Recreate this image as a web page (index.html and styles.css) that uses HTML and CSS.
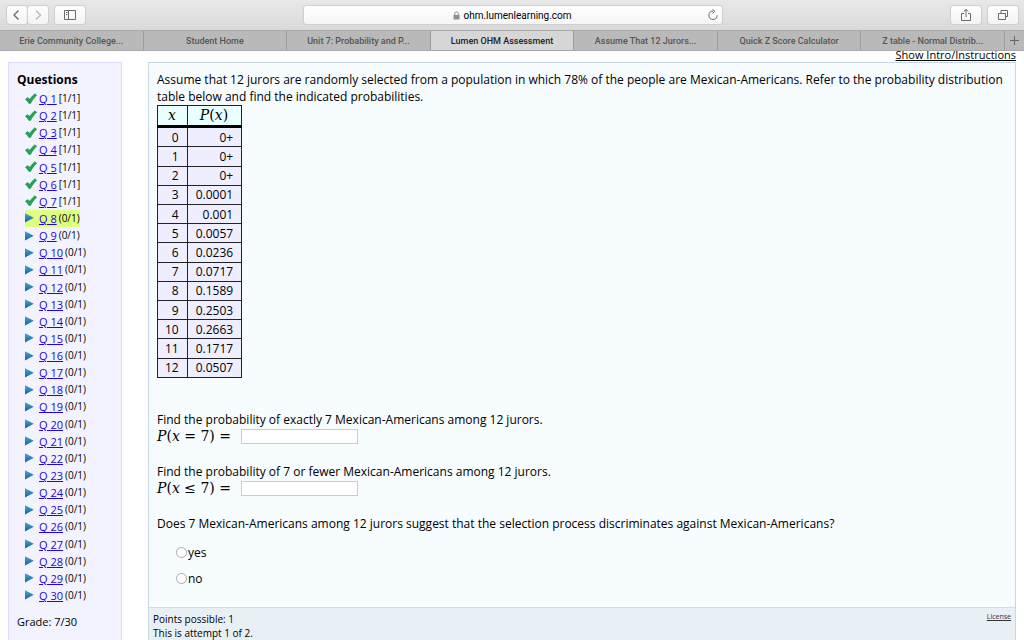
FILE: index.html
```html
<!DOCTYPE html>
<html lang="en">
<head>
    <meta charset="UTF-8">
    <meta name="viewport" content="width=device-width, initial-scale=1.0">
    <title>Lumen OHM Assessment</title>
    <link rel="stylesheet" href="styles.css">
</head>
<body>
    <svg class="defs" aria-hidden="true">
        <linearGradient id="blue" x1="0" y1="0" x2="0" y2="1">
            <stop offset="0" stop-color="#4aa5d0"/>
            <stop offset="1" stop-color="#12659c"/>
        </linearGradient>
        <symbol id="check" viewBox="0 0 12 12">
            <path d="M0.4 6.2 L2.6 4.6 L4.6 6.2 C6.3 4 8 2.2 9.8 0.8 L11.7 2.2 C9 4.7 7.2 7.5 5.6 10.4 L3.8 10.4 C2.9 8.8 1.8 7.4 0.4 6.2 Z" fill="#22a455" stroke="#168a45" stroke-width="0.5"/>
        </symbol>
        <symbol id="arrow" viewBox="0 0 12 12">
            <path d="M0 1.2 L8.8 5.7 L0 10.4 Z" fill="url(#blue)"/>
        </symbol>
    </svg>

    <!-- Browser toolbar -->
    <header class="toolbar">
        <div class="toolbar-left">
            <div class="nav-buttons">
                <button class="tool-btn" type="button" aria-label="Back">
                    <svg width="20" height="18" viewBox="0 0 20 18"><path d="M11.5 4.5 L7 9 L11.5 13.5" fill="none" stroke="#666" stroke-width="1.3"/></svg>
                </button>
                <button class="tool-btn" type="button" aria-label="Forward" disabled>
                    <svg width="20" height="18" viewBox="0 0 20 18"><path d="M8 4.5 L12.5 9 L8 13.5" fill="none" stroke="#b8b8b8" stroke-width="1.3"/></svg>
                </button>
            </div>
            <button class="tool-btn wide" type="button" aria-label="Sidebar">
                <svg width="14" height="12" viewBox="0 0 14 12"><path d="M1.5 1.5 H12.5 V10.5 H1.5 Z M5.5 1.5 V10.5" fill="none" stroke="#6a6a6a"/><path d="M3 3.5 H4.5 M3 5.5 H4.5" stroke="#6a6a6a"/></svg>
            </button>
        </div>
        <div class="address">
            <span class="host">
                <svg width="7" height="9" viewBox="0 0 7 9"><rect x="0.5" y="4" width="6" height="4.5" fill="#8e8e8e"/><path d="M1.7 4.5 V2.7 A1.8 1.8 0 0 1 5.3 2.7 V4.5" fill="none" stroke="#8e8e8e"/></svg>
                ohm.lumenlearning.com
            </span>
            <button class="reload" type="button" aria-label="Reload">
                <svg width="12" height="12" viewBox="0 0 12 12"><path d="M6 2.2 A4.1 4.1 0 1 0 10.1 6.3 M5.4 0.4 L7.9 2.3 L5.4 4.4" fill="none" stroke="#707070"/></svg>
            </button>
        </div>
        <div class="toolbar-right">
            <button class="tool-btn wide" type="button" aria-label="Share">
                <svg width="12" height="14" viewBox="0 0 12 14"><path d="M4 5.5 H1.5 V12.5 H10.5 V5.5 H8 M6 9 V1.5 M3.7 3.6 L6 1.3 L8.3 3.6" fill="none" stroke="#6a6a6a"/></svg>
            </button>
            <button class="tool-btn wide" type="button" aria-label="Show all tabs">
                <svg width="12" height="12" viewBox="0 0 12 12"><path d="M1.5 4.5 H8.5 V10.5 H1.5 Z M4 4.5 V1.5 H10.5 V7.5 H8.5" fill="none" stroke="#6a6a6a"/></svg>
            </button>
        </div>
    </header>

    <nav class="tabs">
        <button class="tab" type="button">Erie Community College...</button>
        <button class="tab" type="button">Student Home</button>
        <button class="tab" type="button">Unit 7: Probability and P...</button>
        <button class="tab active" type="button">Lumen OHM Assessment</button>
        <button class="tab" type="button">Assume That 12 Jurors...</button>
        <button class="tab" type="button">Quick Z Score Calculator</button>
        <button class="tab" type="button">Z table - Normal Distrib...</button>
        <button class="tab-add" type="button" aria-label="New tab">
            <svg width="11" height="11" viewBox="0 0 11 11"><path d="M5.5 1 V10 M1 5.5 H10" stroke="#666"/></svg>
        </button>
    </nav>

    <div class="page">
        <div class="intro"><a href="#">Show Intro/Instructions</a></div>

        <div class="columns">
            <!-- Question list -->
            <aside class="sidebar">
                <h2>Questions</h2>
                <ul class="questions">
                    <li><svg><use href="#check"/></svg><a href="#">Q 1</a> <small>[1/1]</small></li>
                    <li><svg><use href="#check"/></svg><a href="#">Q 2</a> <small>[1/1]</small></li>
                    <li><svg><use href="#check"/></svg><a href="#">Q 3</a> <small>[1/1]</small></li>
                    <li><svg><use href="#check"/></svg><a href="#">Q 4</a> <small>[1/1]</small></li>
                    <li><svg><use href="#check"/></svg><a href="#">Q 5</a> <small>[1/1]</small></li>
                    <li><svg><use href="#check"/></svg><a href="#">Q 6</a> <small>[1/1]</small></li>
                    <li><svg><use href="#check"/></svg><a href="#">Q 7</a> <small>[1/1]</small></li>
                    <li class="current"><svg><use href="#arrow"/></svg><a href="#">Q 8</a> <small>(0/1)</small></li>
                    <li><svg><use href="#arrow"/></svg><a href="#">Q 9</a> <small>(0/1)</small></li>
                    <li><svg><use href="#arrow"/></svg><a href="#">Q 10</a> <small>(0/1)</small></li>
                    <li><svg><use href="#arrow"/></svg><a href="#">Q 11</a> <small>(0/1)</small></li>
                    <li><svg><use href="#arrow"/></svg><a href="#">Q 12</a> <small>(0/1)</small></li>
                    <li><svg><use href="#arrow"/></svg><a href="#">Q 13</a> <small>(0/1)</small></li>
                    <li><svg><use href="#arrow"/></svg><a href="#">Q 14</a> <small>(0/1)</small></li>
                    <li><svg><use href="#arrow"/></svg><a href="#">Q 15</a> <small>(0/1)</small></li>
                    <li><svg><use href="#arrow"/></svg><a href="#">Q 16</a> <small>(0/1)</small></li>
                    <li><svg><use href="#arrow"/></svg><a href="#">Q 17</a> <small>(0/1)</small></li>
                    <li><svg><use href="#arrow"/></svg><a href="#">Q 18</a> <small>(0/1)</small></li>
                    <li><svg><use href="#arrow"/></svg><a href="#">Q 19</a> <small>(0/1)</small></li>
                    <li><svg><use href="#arrow"/></svg><a href="#">Q 20</a> <small>(0/1)</small></li>
                    <li><svg><use href="#arrow"/></svg><a href="#">Q 21</a> <small>(0/1)</small></li>
                    <li><svg><use href="#arrow"/></svg><a href="#">Q 22</a> <small>(0/1)</small></li>
                    <li><svg><use href="#arrow"/></svg><a href="#">Q 23</a> <small>(0/1)</small></li>
                    <li><svg><use href="#arrow"/></svg><a href="#">Q 24</a> <small>(0/1)</small></li>
                    <li><svg><use href="#arrow"/></svg><a href="#">Q 25</a> <small>(0/1)</small></li>
                    <li><svg><use href="#arrow"/></svg><a href="#">Q 26</a> <small>(0/1)</small></li>
                    <li><svg><use href="#arrow"/></svg><a href="#">Q 27</a> <small>(0/1)</small></li>
                    <li><svg><use href="#arrow"/></svg><a href="#">Q 28</a> <small>(0/1)</small></li>
                    <li><svg><use href="#arrow"/></svg><a href="#">Q 29</a> <small>(0/1)</small></li>
                    <li><svg><use href="#arrow"/></svg><a href="#">Q 30</a> <small>(0/1)</small></li>
                </ul>
                <p class="grade">Grade: 7/30</p>
            </aside>

            <!-- Current question -->
            <main class="question">
                <form class="question-body">
                    <p>Assume that 12 jurors are randomly selected from a population in which 78% of the people are Mexican-Americans. Refer to the probability distribution table below and find the indicated probabilities.</p>
                    <table class="dist">
                        <thead>
                            <tr><th class="math"><i>x</i></th><th class="math"><i>P</i>(<i>x</i>)</th></tr>
                        </thead>
                        <tbody>
                            <tr><td>0</td><td>0+</td></tr>
                            <tr><td>1</td><td>0+</td></tr>
                            <tr><td>2</td><td>0+</td></tr>
                            <tr><td>3</td><td>0.0001</td></tr>
                            <tr><td>4</td><td>0.001</td></tr>
                            <tr><td>5</td><td>0.0057</td></tr>
                            <tr><td>6</td><td>0.0236</td></tr>
                            <tr><td>7</td><td>0.0717</td></tr>
                            <tr><td>8</td><td>0.1589</td></tr>
                            <tr><td>9</td><td>0.2503</td></tr>
                            <tr><td>10</td><td>0.2663</td></tr>
                            <tr><td>11</td><td>0.1717</td></tr>
                            <tr><td>12</td><td>0.0507</td></tr>
                        </tbody>
                    </table>

                    <p>Find the probability of exactly 7 Mexican-Americans among 12 jurors.</p>
                    <div class="answer">
                        <label class="math" for="exactly"><i>P</i>(<i>x</i> = 7) =</label>
                        <input type="text" id="exactly">
                    </div>

                    <p>Find the probability of 7 or fewer Mexican-Americans among 12 jurors.</p>
                    <div class="answer">
                        <label class="math" for="fewer"><i>P</i>(<i>x</i> ≤ 7) =</label>
                        <input type="text" id="fewer">
                    </div>

                    <p>Does 7 Mexican-Americans among 12 jurors suggest that the selection process discriminates against Mexican-Americans?</p>
                    <div class="choices">
                        <label><input type="radio" name="suggest" value="yes">yes</label>
                        <label><input type="radio" name="suggest" value="no">no</label>
                    </div>
                </form>
                <footer class="question-info">
                    <p>Points possible: 1<br>This is attempt 1 of 2.</p>
                    <a class="license" href="#">License</a>
                </footer>
            </main>
        </div>
    </div>
</body>
</html>
```
FILE: styles.css
```css
* {
    box-sizing: border-box;
}
body {
    font-family: "Open Sans", "Noto Sans", sans-serif;
    font-size: 12px;
    line-height: 17px;
    background-color: #fff;
    color: #000;
    margin: 0;
    height: 100vh;
    display: flex;
    flex-direction: column;
    overflow: hidden;
}
p, h2, ul {
    margin: 0;
    padding: 0;
}
button {
    border: 0;
    padding: 0;
    background: none;
    font-family: inherit;
}
svg {
    display: block;
}
.defs {
    position: absolute;
    width: 0;
    height: 0;
}

/* browser toolbar */
.toolbar, .tabs {
    font-family: Roboto, "Liberation Sans", sans-serif;
}
.toolbar {
    display: grid;
    grid-template-columns: 1fr 418px 1fr;
    align-items: center;
    flex: none;
    height: 30px;
    padding: 0 6px 0 7px;
    background: linear-gradient(#e9e9e9, #d9d9d9);
}
.toolbar-left, .toolbar-right {
    display: flex;
    gap: 7px;
}
.toolbar-right {
    justify-content: flex-end;
}
.nav-buttons {
    display: flex;
    gap: 1px;
}
.tool-btn {
    display: flex;
    align-items: center;
    justify-content: center;
    width: 20px;
    height: 18px;
    border-radius: 3px;
    background: linear-gradient(#fefefe, #f3f3f3);
    box-shadow: 0 0 1px 1px #cfcfcf;
}
.tool-btn.wide {
    width: 30px;
}
.address {
    display: flex;
    align-items: center;
    height: 18px;
    padding: 0 3px 0 15px;
    border-radius: 3px;
    background: linear-gradient(#fff, #f5f5f5);
    box-shadow: 0 0 1px 1px #cfcfcf;
}
.host {
    display: flex;
    align-items: center;
    justify-content: center;
    gap: 3px;
    flex: 1;
    font-size: 10px;
}
.tabs {
    display: flex;
    flex: none;
    height: 21px;
    background-color: #b9b9b9;
    border-top: 1px solid #a9a9a9;
    border-bottom: 1px solid #a9a9a9;
}
.tab {
    flex: 1;
    min-width: 0;
    border-right: 1px solid #9c9c9c;
    color: #555;
    font-size: 9px;
    font-weight: 500;
    white-space: nowrap;
}
.tab.active {
    background-color: #d6d6d6;
    color: #222;
}
.tab-add {
    display: flex;
    align-items: center;
    justify-content: center;
    width: 19px;
}

/* page */
.page {
    flex: 1;
    min-height: 0;
    display: flex;
    flex-direction: column;
    padding: 0 8px;
}
.intro {
    padding-bottom: 3px;
    font-size: 11px;
    line-height: 8px;
    text-align: right;
}
.intro a {
    color: #000;
}
.columns {
    display: flex;
    flex: 1;
    gap: 26px;
    min-height: 0;
}
.sidebar {
    display: flex;
    flex-direction: column;
    flex: none;
    width: 114px;
    padding: 8px 8px 10px;
    background-color: #f3f3ff;
    border: 1px solid #dcdcf8;
    border-bottom: 0;
    font-size: 11px;
}
.sidebar h2 {
    padding-bottom: 2px;
    font-size: 12px;
}
.questions {
    flex: 1;
    display: grid;
    grid-auto-rows: 1fr;
    justify-items: start;
    padding-left: 8px;
    list-style: none;
}
.questions li {
    display: flex;
    align-items: center;
    gap: 2px;
}
.questions svg {
    width: 12px;
    height: 12px;
}
.questions a {
    color: #20e;
}
.questions small {
    font-size: 10px;
}
.questions .current {
    background-color: #dfff80;
}
.grade {
    padding-top: 9px;
}

/* question */
.question {
    flex: 1;
    min-width: 0;
    display: flex;
    flex-direction: column;
    border: 1px solid #c5d8e4;
    border-bottom: 0;
    background-color: #f7fcff;
}
.question-body {
    flex: 1;
    padding: 8px;
}
.math {
    font-family: "DejaVu Serif", serif;
    font-size: 14px;
    font-weight: normal;
}
.dist {
    height: 273px;
    margin-bottom: 33px;
    border-collapse: collapse;
    background-color: #eeeeff;
}
.dist th, .dist td {
    border: 1px solid #222;
    padding: 0 8px 0 7px;
    text-align: right;
}
.dist td + td {
    padding: 0 8px;
}
.dist th {
    height: 21px;
    text-align: center;
    background-color: #eaffff;
    border-bottom: 3px solid #000;
}
.answer {
    display: flex;
    align-items: center;
    gap: 9px;
    margin-bottom: 18px;
}
.answer .math {
    min-width: 75px;
}
.answer input {
    width: 117px;
    height: 15px;
    padding: 0 2px;
    border: 1px solid #ccc;
    background-color: #fff;
}
.choices {
    display: flex;
    flex-direction: column;
    align-items: flex-start;
    gap: 9px;
    padding: 12px 19px;
}
.choices label {
    display: flex;
    align-items: center;
    gap: 1px;
}
.choices input {
    appearance: none;
    width: 11px;
    height: 11px;
    margin: 0;
    border: 1px solid #aaa;
    border-radius: 50%;
    background-color: #fff;
}
.choices input:checked {
    background-color: #333;
}
.question-info {
    display: flex;
    justify-content: space-between;
    padding: 4px 4px 2px;
    border-top: 1px solid #d3dfe8;
    background-color: #e8f0f6;
    font-size: 10px;
    line-height: 14px;
}
.license {
    color: #333;
    font-size: 7px;
    line-height: 10px;
}
```
